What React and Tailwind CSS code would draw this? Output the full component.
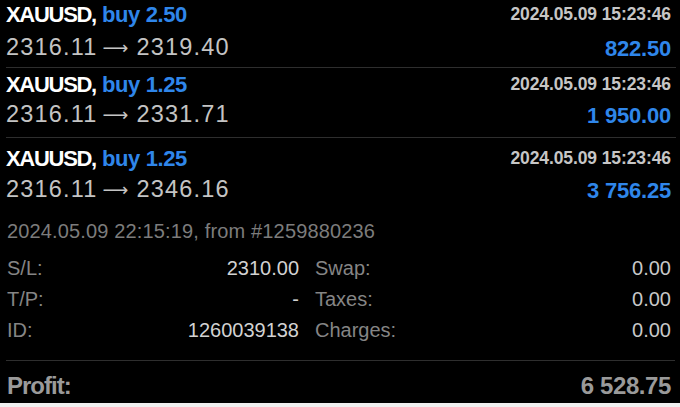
const trades = [
  { lots: "2.50", open: "2316.11", close: "2319.40", time: "2024.05.09 15:23:46", profit: "822.50", pad: "pt-[2px]", gap: "mt-[7px]", bottom: "mb-[4px]" },
  { lots: "1.25", open: "2316.11", close: "2331.71", time: "2024.05.09 15:23:46", profit: "1 950.00", pad: "pt-[4px]", gap: "mt-[4px]", bottom: "mb-[7px]" },
  { lots: "1.25", open: "2316.11", close: "2346.16", time: "2024.05.09 15:23:46", profit: "3 756.25", pad: "pt-[8px]", gap: "mt-[5px]", bottom: "", last: true },
];

const details = [
  ["S/L:", "2310.00", "Swap:", "0.00"],
  ["T/P:", "-", "Taxes:", "0.00"],
  ["ID:", "1260039138", "Charges:", "0.00"],
];

function TradeRow({ t }) {
  return (
    <div className={`pl-[6px] shrink-0 ${t.pad}`}>
      <div className="flex justify-between items-center h-[24px] pr-[9px]">
        <div className="text-[22px] font-bold whitespace-nowrap">
          <span className="text-white tracking-[-1.3px]">XAUUSD,</span>{" "}
          <span className="text-[#2f86ea] tracking-[-0.4px]">buy {t.lots}</span>
        </div>
        <div className="text-[17.5px] font-bold text-[#c6c6c6] tracking-[-0.1px]">{t.time}</div>
      </div>
      <div className={`flex justify-between items-center h-[30px] pr-[9px] ${t.gap} ${t.bottom}`}>
        <div className="text-[23.5px] text-[#c4c4c4] whitespace-nowrap flex items-center">
          <span className="tracking-[1.2px]">{t.open}</span>
          <span className="font-['DejaVu_Sans',sans-serif] text-[18px] ml-[5px] mr-[8px] leading-none">⟶</span>
          <span className="tracking-[1.2px]">{t.close}</span>
        </div>
        <div className="text-[22px] font-bold text-[#2f86ea] tracking-[-0.2px]">{t.profit}</div>
      </div>
      {!t.last && <div className="h-px bg-[#2e2e2e] mr-[4px]" />}
    </div>
  );
}

export default function App() {
  return (
    <div className="w-[680px] h-[407px] bg-black overflow-hidden flex flex-col font-['Liberation_Sans',Arial,sans-serif]">
      {trades.map((t, i) => (
        <TradeRow key={i} t={t} />
      ))}

      <div className="pl-[7px] pr-[9px] mt-[12px] shrink-0">
        <div className="h-[28px] flex items-center text-[20px] text-[#7c7c7c] tracking-[0.15px] whitespace-nowrap">
          2024.05.09 22:15:19, from #1259880236
        </div>
        <div className="mt-[7px]">
          {details.map((d) => (
            <div key={d[0]} className="flex h-[31px] items-center text-[20px]">
              <div className="w-[292px] flex justify-between">
                <span className="text-[#858585]">{d[0]}</span>
                <span className="text-[#d2d2d2]">{d[1]}</span>
              </div>
              <div className="flex-1 ml-[16px] flex justify-between">
                <span className="text-[#858585]">{d[2]}</span>
                <span className="text-[#c8c8c8]">{d[3]}</span>
              </div>
            </div>
          ))}
        </div>
      </div>

      <div className="h-px shrink-0 bg-[#2e2e2e] ml-[6px] mr-[5px] mt-[15px]" />
      <div className="pl-[7px] pr-[9px] pt-[8px] h-[42px] shrink-0 flex justify-between items-center font-bold text-[24px] text-[#9a9a9a]">
        <span className="tracking-[-1px]">Profit:</span>
        <span className="tracking-[-0.4px]">6 528.75</span>
      </div>
      <div className="flex-1 bg-[#f0f0f0]" />
    </div>
  );
}
